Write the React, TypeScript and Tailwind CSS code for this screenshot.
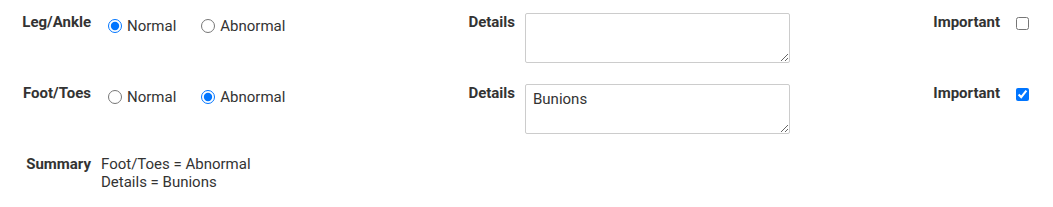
import { useState } from 'react';

type Row = {
  label: string;
  value: 'Normal' | 'Abnormal';
  details: string;
  important: boolean;
};

const initialRows: Row[] = [
  { label: 'Leg/Ankle', value: 'Normal', details: '', important: false },
  { label: 'Foot/Toes', value: 'Abnormal', details: 'Bunions', important: true },
];

export default function App() {
  const [rows, setRows] = useState(initialRows);

  const update = (idx: number, patch: Partial<Row>) =>
    setRows(rs => rs.map((r, i) => (i === idx ? { ...r, ...patch } : r)));

  return (
    <div className="w-[1053px] h-[207px] bg-white text-[15px] text-[#333] font-['Roboto',sans-serif] pt-[13px]">
      {rows.map((row, idx) => (
        <div key={row.label} className="flex items-start h-[50px] mb-[21px]">
          {/* Label */}
          <div className="w-[91px] text-right font-bold leading-[18px]">{row.label}</div>

          {/* Radio group */}
          <div className="ml-[17px] w-[347px] flex items-center gap-[25px] pt-[3px]">
            {(['Normal', 'Abnormal'] as const).map(opt => (
              <label key={opt} className="flex items-center gap-[5px] leading-[20px]">
                <input
                  type="radio"
                  name={`r-${idx}`}
                  checked={row.value === opt}
                  onChange={() => update(idx, { value: opt })}
                  className="m-0 w-[14px] h-[14px]"
                />
                {opt}
              </label>
            ))}
          </div>

          {/* Details */}
          <div className="w-[60px] text-right font-bold leading-[18px]">Details</div>
          <textarea
            value={row.details}
            onChange={e => update(idx, { details: e.target.value })}
            className="ml-[10px] w-[265px] h-[50px] border border-[#ccc] rounded-[2px] px-[7px] py-[4px] leading-[20px] outline-none"
          />

          {/* Important */}
          <div className="flex-1 text-right font-bold leading-[18px]">Important</div>
          <input
            type="checkbox"
            checked={row.important}
            onChange={e => update(idx, { important: e.target.checked })}
            className="ml-[16px] mr-[24px] mt-[4px] w-[13px] h-[13px]"
          />
        </div>
      ))}

      {/* Summary */}
      <div className="flex items-start">
        <div className="w-[91px] text-right font-bold leading-[18px]">Summary</div>
        <div className="ml-[10px] leading-[18px]">
          <div>Foot/Toes = Abnormal</div>
          <div>Details = Bunions</div>
        </div>
      </div>
    </div>
  );
}
